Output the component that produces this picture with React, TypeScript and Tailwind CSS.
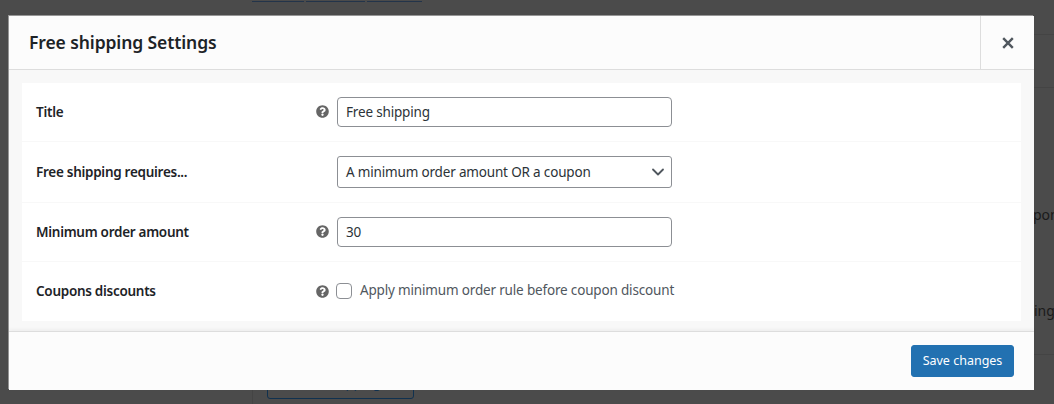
import { ChevronDown } from "lucide-react";
import { FaQuestionCircle } from "react-icons/fa";

function Help() {
  return (
    <span className="flex w-[21px] shrink-0 -translate-y-px items-center">
      <FaQuestionCircle className="h-[13px] w-[13px] text-[#666]" />
    </span>
  );
}

function Row({ label, children, last }: { label: string; children: React.ReactNode; last?: boolean }) {
  return (
    <div className={`flex items-center pl-[14px] ${last ? "h-[59px]" : "border-b border-[#f8f8f8] py-[14px]"}`}>
      <div className="w-[280px] shrink-0 text-[13.5px] font-semibold tracking-[-0.28px] text-[#1d2327]">{label}</div>
      {children}
    </div>
  );
}

export default function App() {
  return (
    <div className="relative h-[404px] w-[1054px] overflow-hidden bg-[#4b4b4b] font-['Noto_Sans',sans-serif]">
      {/* page behind the overlay */}
      <div className="absolute left-[252px] top-px flex h-px gap-[2px]">
        <div className="w-[52px] bg-[#23344a]" />
        <div className="w-[59px] bg-[#23344a]" />
        <div className="w-[55px] bg-[#23344a]" />
      </div>
      <div className="absolute left-[252px] top-[390px] h-[14px] w-px bg-[#444]" />
      <div className="absolute left-[267px] top-[369px] flex h-[30px] w-[147px] items-center justify-center rounded-[3px] border border-[#10314f] text-[13px] text-[#10314f]">
        Add shipping
      </div>
      <div className="absolute right-0 top-[34px] h-px w-[20px] bg-[#444]" />
      <div className="absolute right-0 top-[87px] h-px w-[20px] bg-[#444]" />
      <div className="absolute right-0 top-[354px] h-px w-[20px] bg-[#444]" />
      <div className="absolute left-[1033px] top-[204px] text-[14px] text-[#1a1a1a]">pon</div>
      <div className="absolute left-[1034px] top-[300px] text-[14px] text-[#1a1a1a]">ing</div>

      <div className="absolute left-[9px] top-[16px] flex h-[374px] w-[1025px] flex-col bg-[#fcfcfc] shadow-[-1px_-1px_0_#969696]">
        <header className="flex h-[54px] shrink-0 items-center justify-between border-b border-[#dddddd]">
          <h1 className="pl-5 text-[17.5px] font-semibold leading-none tracking-[-0.1px] text-[#1d2327]">
            Free shipping Settings
          </h1>
          <button className="flex h-full w-[54px] items-center justify-center border-l border-[#dddddd] text-[#50575e]">
            <svg width="12" height="12" viewBox="0 0 12 12" fill="none" stroke="currentColor" strokeWidth="2.4">
              <path d="M1.2 1.2 10.8 10.8M10.8 1.2 1.2 10.8" />
            </svg>
          </button>
        </header>

        <div className="flex-1 bg-[#f8f8f8] px-[13px] pt-[13px]">
          <div className="bg-white">
            <Row label="Title">
              <Help />
              <input
                readOnly
                value="Free shipping"
                className="h-[30px] w-[335px] rounded border border-[#8c8f94] bg-white px-2 text-[13.5px] tracking-[-0.17px] text-[#2c3338]"
              />
            </Row>
            <Row label="Free shipping requires...">
              <span className="w-[21px] shrink-0" />
              <div className="flex h-[32px] w-[335px] items-center justify-between rounded-[3px] border border-[#8c8f94] bg-white pl-2 pr-[3px] text-[13.5px] tracking-[-0.17px] text-[#2c3338]">
                <span>A minimum order amount OR a coupon</span>
                <ChevronDown className="h-5 w-5 text-[#50575e]" strokeWidth={2.2} />
              </div>
            </Row>
            <Row label="Minimum order amount">
              <Help />
              <input
                readOnly
                value="30"
                className="h-[30px] w-[335px] rounded border border-[#8c8f94] bg-white px-2 text-[13.5px] tracking-[-0.17px] text-[#2c3338]"
              />
            </Row>
            <Row label="Coupons discounts" last>
              <span className="flex w-[20px] shrink-0 items-center">
                <FaQuestionCircle className="h-[13px] w-[13px] text-[#666]" />
              </span>
              <span className="h-4 w-4 shrink-0 -translate-y-px rounded-[4px] border border-[#8c8f94] bg-white" />
              <span className="ml-2 -translate-y-px text-[13.5px] tracking-[-0.17px] text-[#50575e]">
                Apply minimum order rule before coupon discount
              </span>
            </Row>
          </div>
        </div>

        <footer className="flex h-[59px] shrink-0 items-center justify-end border-t border-[#dddddd] pr-5 shadow-[0_-2px_3px_rgba(0,0,0,0.04)]">
          <button className="h-[32px] w-[103px] rounded-[3px] border border-[#2271b1] bg-[#2271b1] text-[12.5px] text-white">
            Save changes
          </button>
        </footer>
      </div>
    </div>
  );
}
